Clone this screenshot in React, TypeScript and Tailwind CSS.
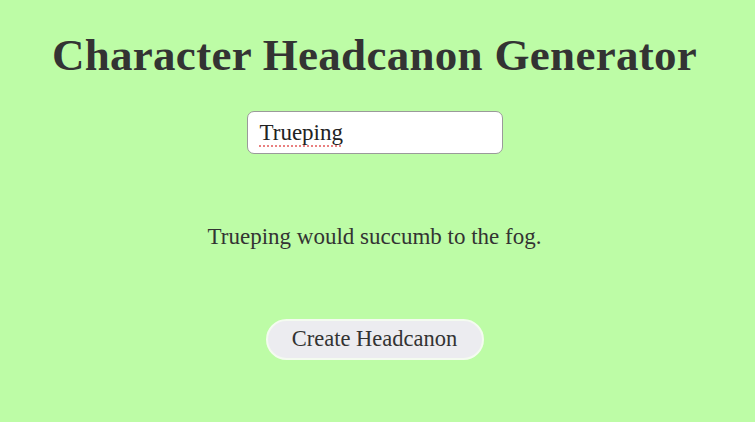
import { useState } from 'react';

const lines = [
    'would succumb to the fog.',
];

export default function App() {
    const [name] = useState('Trueping');
    const [line] = useState(lines[0]);

    return (
        <div className="min-h-screen w-full bg-[#bdfca6] text-[#333333] font-['Liberation_Serif','Times_New_Roman',serif] flex flex-col items-center pr-[6px]">
            <h1 className="mt-[27px] text-[45px] leading-[56px] font-bold tracking-[0.3px]">Character Headcanon Generator</h1>

            <div className="mt-[28px] w-[256px] h-[43px] bg-white border border-[#9a9a9a] rounded-[7px] flex items-center px-[12px]">
                <span className="text-[23px] leading-none text-[#222222] underline decoration-dotted decoration-[#e98080] decoration-2 underline-offset-[5px]">{name}</span>
            </div>

            <p className="mt-[69px] text-[23px] leading-[28px]">{name} {line}</p>

            <button className="mt-[68px] w-[218px] h-[41px] rounded-full bg-[#ececf0] border-2 border-[#f4fbf0] text-[22.5px] leading-none text-[#333333]">
                Create Headcanon
            </button>
        </div>
    );
}
